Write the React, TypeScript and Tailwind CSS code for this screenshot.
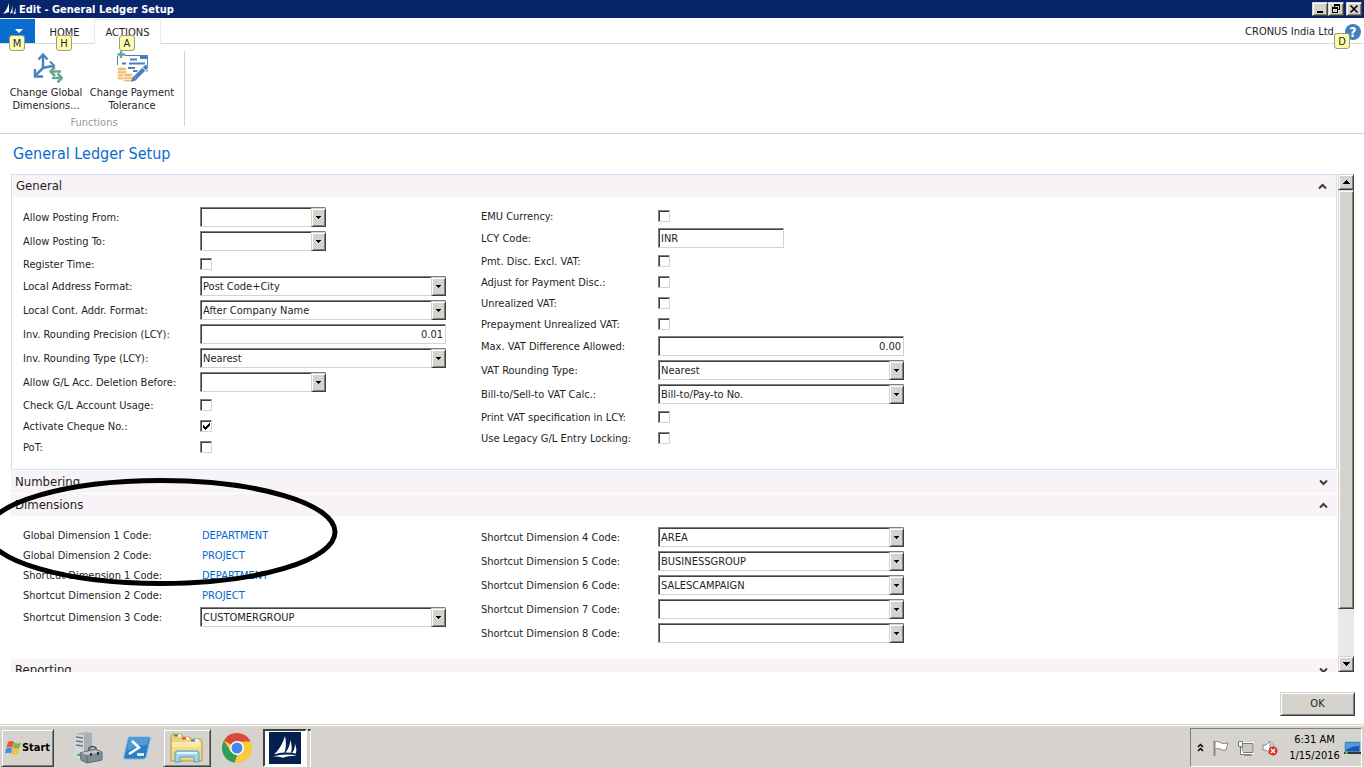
import { useState } from "react";
import type { ReactNode } from "react";

type Field = {
  id: string;
  label: string;
  kind: "lookup" | "option" | "text" | "number" | "check" | "link";
  value?: string;
  narrow?: boolean;
  checked?: boolean;
};

const generalLeft: Field[] = [
  { id: "posting-from", label: "Allow Posting From:", kind: "lookup", narrow: true },
  { id: "posting-to", label: "Allow Posting To:", kind: "lookup", narrow: true },
  { id: "register-time", label: "Register Time:", kind: "check" },
  { id: "address-format", label: "Local Address Format:", kind: "option", value: "Post Code+City" },
  { id: "contact-format", label: "Local Cont. Addr. Format:", kind: "option", value: "After Company Name" },
  { id: "inv-precision", label: "Inv. Rounding Precision (LCY):", kind: "number", value: "0.01" },
  { id: "inv-type", label: "Inv. Rounding Type (LCY):", kind: "option", value: "Nearest" },
  { id: "deletion-before", label: "Allow G/L Acc. Deletion Before:", kind: "lookup", narrow: true },
  { id: "check-usage", label: "Check G/L Account Usage:", kind: "check" },
  { id: "cheque-no", label: "Activate Cheque No.:", kind: "check", checked: true },
  { id: "pot", label: "PoT:", kind: "check" },
];

const generalRight: Field[] = [
  { id: "emu", label: "EMU Currency:", kind: "check" },
  { id: "lcy", label: "LCY Code:", kind: "text", value: "INR", narrow: true },
  { id: "pmt-disc", label: "Pmt. Disc. Excl. VAT:", kind: "check" },
  { id: "adjust-disc", label: "Adjust for Payment Disc.:", kind: "check" },
  { id: "unrealized", label: "Unrealized VAT:", kind: "check" },
  { id: "prepayment", label: "Prepayment Unrealized VAT:", kind: "check" },
  { id: "max-diff", label: "Max. VAT Difference Allowed:", kind: "number", value: "0.00" },
  { id: "vat-type", label: "VAT Rounding Type:", kind: "option", value: "Nearest" },
  { id: "bill-sell", label: "Bill-to/Sell-to VAT Calc.:", kind: "option", value: "Bill-to/Pay-to No." },
  { id: "print-vat", label: "Print VAT specification in LCY:", kind: "check" },
  { id: "legacy", label: "Use Legacy G/L Entry Locking:", kind: "check" },
];

const dimensionsLeft: Field[] = [
  { id: "global-1", label: "Global Dimension 1 Code:", kind: "link", value: "DEPARTMENT" },
  { id: "global-2", label: "Global Dimension 2 Code:", kind: "link", value: "PROJECT" },
  { id: "shortcut-1", label: "Shortcut Dimension 1 Code:", kind: "link", value: "DEPARTMENT" },
  { id: "shortcut-2", label: "Shortcut Dimension 2 Code:", kind: "link", value: "PROJECT" },
  { id: "shortcut-3", label: "Shortcut Dimension 3 Code:", kind: "lookup", value: "CUSTOMERGROUP" },
];

const dimensionsRight: Field[] = [
  { id: "shortcut-4", label: "Shortcut Dimension 4 Code:", kind: "lookup", value: "AREA" },
  { id: "shortcut-5", label: "Shortcut Dimension 5 Code:", kind: "lookup", value: "BUSINESSGROUP" },
  { id: "shortcut-6", label: "Shortcut Dimension 6 Code:", kind: "lookup", value: "SALESCAMPAIGN" },
  { id: "shortcut-7", label: "Shortcut Dimension 7 Code:", kind: "lookup" },
  { id: "shortcut-8", label: "Shortcut Dimension 8 Code:", kind: "lookup" },
];

const sunken =
  "border border-t-[#808080] border-l-[#808080] border-r-[#d6d3ce] border-b-[#d6d3ce] shadow-[inset_1px_1px_0_#404040]";
const raised =
  "bg-[#d6d3ce] border border-t-[#d6d3ce] border-l-[#d6d3ce] border-r-[#404040] border-b-[#404040] shadow-[inset_1px_1px_0_#ffffff,inset_-1px_-1px_0_#808080]";

function DropArrow() {
  return (
    <svg width="5" height="3" viewBox="0 0 5 3" shapeRendering="crispEdges" aria-hidden="true">
      <path d="M0 0h5v1H4v1H3v1H2V2H1V1H0z" fill="#000" />
    </svg>
  );
}

function Control({ field }: { field: Field }) {
  const [value, setValue] = useState(field.value ?? "");
  const [checked, setChecked] = useState(field.checked ?? false);
  const width = field.narrow ? "w-[126px]" : "w-[246px]";

  if (field.kind === "link") {
    return (
      <a id={field.id} href="#" className="pt-0.5 pl-0.5 text-[#0066cc]">
        {field.value}
      </a>
    );
  }
  if (field.kind === "check") {
    return (
      <span className="relative flex">
        <input
          id={field.id}
          type="checkbox"
          checked={checked}
          onChange={(e) => setChecked(e.target.checked)}
          className={`h-3 w-3 appearance-none bg-white ${sunken}`}
        />
        {checked && (
          <svg className="pointer-events-none absolute top-[3px] left-[3px]" width="7" height="7" viewBox="0 0 7 7" shapeRendering="crispEdges" aria-hidden="true">
            <path d="M0 2h1v1h1v1h1V3h1V2h1V1h1V0h1v3H6v1H5v1H4v1H3v1H2V6H1V5H0z" fill="#000" />
          </svg>
        )}
      </span>
    );
  }
  if (field.kind === "option") {
    return (
      <span className={`relative flex h-5 ${width}`}>
        <select id={field.id} className={`h-5 w-full appearance-none bg-white pt-0.5 pl-0.5 ${sunken}`}>
          <option>{field.value}</option>
        </select>
        <span className={`pointer-events-none absolute top-px right-0 flex h-[19px] w-[15px] items-center justify-center ${raised}`}>
          <DropArrow />
        </span>
      </span>
    );
  }
  return (
    <span className={`relative flex h-5 ${width}`}>
      <input
        id={field.id}
        type="text"
        value={value}
        onChange={(e) => setValue(e.target.value)}
        className={`h-5 w-full bg-white px-0.5 ${field.kind === "number" ? "text-right" : ""} ${sunken}`}
      />
      {field.kind === "lookup" && (
        <button
          type="button"
          aria-label={`Look up ${field.label}`}
          className={`absolute top-px right-0 flex h-[19px] w-[15px] items-center justify-center ${raised}`}
        >
          <DropArrow />
        </button>
      )}
    </span>
  );
}

function FieldColumn({ fields }: { fields: Field[] }) {
  return (
    <div className="w-[458px] shrink-0">
      {fields.map((f) => {
        const height = f.kind === "check" ? "h-[21px]" : f.kind === "link" ? "h-5" : "h-6";
        return (
          <div key={f.id} className={`flex items-center ${height}`}>
            <label htmlFor={f.id} className="w-[177px] shrink-0 pt-0.5">
              {f.label}
            </label>
            <Control field={f} />
          </div>
        );
      })}
    </div>
  );
}

function FastTab({ title, open, children }: { title: string; open?: boolean; children?: ReactNode }) {
  return (
    <section>
      <button type="button" aria-expanded={!!open} className="flex h-[22px] w-full items-center justify-between bg-[#f7f3f7] pr-[9px] pl-1 text-left text-[13px]">
        {title}
        <svg width="9" height="7" viewBox="0 0 9 7" fill="none" stroke="#3c3c3c" strokeWidth="2" aria-hidden="true">
          <path d={open ? "M1 5.5l3.5-3.5L8 5.5" : "M1 1.5L4.5 5 8 1.5"} />
        </svg>
      </button>
      {children}
    </section>
  );
}

function KeyTip({ children, className }: { children: string; className: string }) {
  return (
    <span className={`absolute z-10 flex h-4 w-4 items-center justify-center rounded-[3px] border border-[#999] bg-[#ffffa0] text-[11px] leading-none text-[#1c1c6c] ${className}`}>
      {children}
    </span>
  );
}

function Sails({ className }: { className: string }) {
  return (
    <svg viewBox="0 0 32 32" className={className} fill="#fff" aria-hidden="true">
      <path d="M16 4Q13 15 5 22.500q5-2 10.500-2Q18 13 16 4z" />
      <path d="M21.500 8q-1 8-5 12.500l5.500.3q1.500-6-.5-12.800z" />
      <path d="M26 11.500q0 6-3 9.500l4 .6q1-5-1-10.100z" />
      <path d="M4 24.500q12-3.500 24-.8-10 0-14 2-5-1.700-10-1.200z" />
    </svg>
  );
}

function TitleBar() {
  return (
    <header className="flex h-[18px] items-center justify-between bg-[#08246b] pr-0.5 pl-0.5 text-white">
      <div className="flex items-center">
        <svg width="16" height="16" viewBox="0 0 16 16" fill="#fff" aria-hidden="true">
          <path d="M7 2v9L1 13q4-4 6-11z" />
          <path d="M10.500 4.500V12L8 12.500q2-4 2.500-8z" />
          <path d="M13.500 6v7h-2q1.500-3 2-7z" />
        </svg>
        <h1 className="ml-px pt-0.5 text-[11px] font-bold">Edit - General Ledger Setup</h1>
      </div>
      <div className="flex text-black">
        <button type="button" aria-label="Minimize" className={`flex h-[14px] w-4 items-center justify-center ${raised}`}>
          <svg width="12" height="10" viewBox="0 0 12 10"><path d="M3 7h6v2H3z" /></svg>
        </button>
        <button type="button" aria-label="Restore" className={`flex h-[14px] w-4 items-center justify-center ${raised}`}>
          <svg width="12" height="10" viewBox="0 0 12 10" shapeRendering="crispEdges">
            <path d="M4 0h6v6H8V5h1V2H5v1H4zM2 3h6v6H2zm1 2v3h4V5z" fillRule="evenodd" />
          </svg>
        </button>
        <button type="button" aria-label="Close" className={`ml-0.5 flex h-[14px] w-4 items-center justify-center ${raised}`}>
          <svg width="12" height="10" viewBox="0 0 12 10" stroke="#000" strokeWidth="1.6"><path d="M2.500 1.500l7 7M9.500 1.500l-7 7" /></svg>
        </button>
      </div>
    </header>
  );
}

function DimensionsIcon() {
  return (
    <svg width="34" height="32" viewBox="0 0 34 32" fill="none" aria-hidden="true">
      <g stroke="#4a80c0" strokeWidth="2.500">
        <path d="M14 5v12l-7 7M14 17l9-2" />
        <path d="M9.500 8.500L14 3.500l4.500 5M6 18v7.500h8" />
        <path d="M21 10.500l4 4-2 2" strokeWidth="2" />
      </g>
      <g stroke="#68a890" strokeWidth="2.500">
        <path d="M22 20.500h10M26 16l-4.500 4.500L26 25" />
        <path d="M23 27h9M28.500 22.500L33 27l-4.500 4.500" />
      </g>
    </svg>
  );
}

function PaymentIcon() {
  return (
    <svg width="34" height="32" viewBox="0 0 34 32" fill="none" aria-hidden="true">
      <path d="M2.500 5v9M10 4.500h22.500V20H20" stroke="#4a80c0" />
      <path d="M25 5h7v3h-7z" fill="#4a80c0" />
      <path d="M15 8.500h7M7 12.500h4M14 12.500h16M13 17h7" stroke="#4a80c0" strokeWidth="2" />
      <path d="M6 0v7M2.500 3.500h7.500" stroke="#68a890" strokeWidth="2.500" />
      <g fill="#eebc70" stroke="#fff" strokeWidth=".8">
        <ellipse cx="7" cy="27" rx="5" ry="2" />
        <ellipse cx="7" cy="24" rx="5" ry="2" />
        <ellipse cx="7" cy="21" rx="5" ry="2" />
        <ellipse cx="7" cy="18" rx="5" ry="2" />
        <ellipse cx="13" cy="29" rx="5" ry="2" />
        <ellipse cx="13" cy="26.500" rx="5" ry="2" />
        <ellipse cx="13" cy="24" rx="5" ry="2" />
      </g>
      <path d="M18 20h4" stroke="#4a80c0" strokeWidth="2" />
      <path d="M32 15L20 27" stroke="#fff" strokeWidth="6" />
      <path d="M32 15L20 27" stroke="#4a80c0" strokeWidth="4" />
      <path d="M27.500 16.500l3 3" stroke="#fff" />
      <path d="M18 25l-2 6 6-2z" fill="#4a80c0" />
    </svg>
  );
}

function Ribbon() {
  return (
    <div className="border-b border-[#d4d4d4]">
      <nav className="flex h-[26px] items-end justify-between border-b border-[#d9d9d9]">
        <div className="flex h-6 text-[11px]">
          <div className="relative">
            <button type="button" aria-label="Application menu" className="flex h-6 w-[35px] items-center justify-center bg-[#0a6cce] pl-0.5">
              <svg width="8" height="4" viewBox="0 0 8 4"><path d="M0 0h8L4 4z" fill="#fff" /></svg>
            </button>
            <KeyTip className="top-4 left-[9px]">M</KeyTip>
          </div>
          <div className="relative flex w-[59px]">
            <button type="button" className="w-full pt-1">HOME</button>
            <KeyTip className="top-4 left-[21px]">H</KeyTip>
          </div>
          <div className="relative flex w-[67px]">
            <button type="button" className="mb-[-1px] w-full border border-b-0 border-[#dcecf8] bg-white pt-0.5">ACTIONS</button>
            <KeyTip className="top-4 left-[25px]">A</KeyTip>
          </div>
        </div>
        <div className="relative flex h-6 items-center gap-2 pt-0.5 pr-[3px] text-[11px]">
          <span>CRONUS India Ltd.</span>
          <button type="button" aria-label="Help" className="flex h-4 w-4 items-center justify-center rounded-full bg-[#3f7fc0] text-sm font-bold text-white">?</button>
          <KeyTip className="top-[14px] right-[14px]">D</KeyTip>
        </div>
      </nav>
      <div className="flex h-[89px] py-[7px]">
        <div className="flex flex-col items-center border-r border-[#d4d4d4] pr-2 pl-1">
          <div className="flex text-center text-[11px] leading-[13px]">
            <button type="button" className="flex w-[84px] flex-col items-center">
              <DimensionsIcon />
              <span className="mt-[3px]">Change Global Dimensions...</span>
            </button>
            <button type="button" className="flex w-[88px] flex-col items-center">
              <PaymentIcon />
              <span className="mt-[3px]">Change Payment Tolerance</span>
            </button>
          </div>
          <span className="mt-1 pl-2 text-[11px] leading-[13px] text-[#999]">Functions</span>
        </div>
      </div>
    </div>
  );
}

function ScrollBar() {
  return (
    <div className="flex w-4 shrink-0 flex-col bg-[#ebe9e5]">
      <button type="button" aria-label="Scroll up" className={`flex h-4 items-center justify-center ${raised}`}>
        <svg width="7" height="4" viewBox="0 0 7 4" shapeRendering="crispEdges"><path d="M3 0h1v1h1v1h1v1h1v1H0V3h1V2h1V1h1z" /></svg>
      </button>
      <div className="flex-1">
        <div className={`h-[90%] ${raised}`} />
      </div>
      <button type="button" aria-label="Scroll down" className={`flex h-4 items-center justify-center ${raised}`}>
        <svg width="7" height="4" viewBox="0 0 7 4" shapeRendering="crispEdges"><path d="M0 0h7v1H6v1H5v1H4v1H3V3H2V2H1V1H0z" /></svg>
      </button>
    </div>
  );
}

function StartFlag() {
  return (
    <svg width="17" height="16" viewBox="0 0 17 16" aria-hidden="true">
      <path d="M3 2q3-2 6 0L7.500 7.500q-3-1.500-6 0z" fill="#e8542c" />
      <path d="M9.500 2.500q3 2 6.500 0L14.500 8q-3 1.500-6.500 0z" fill="#7fb83c" />
      <path d="M1.300 8.300q3-1.500 6 0L6 13.500q-3-1.500-6 0z" fill="#3f8fdc" />
      <path d="M7.800 8.800q3 1.700 6.500 0L13 14q-3.500 1.500-6.500 0z" fill="#f8c030" />
    </svg>
  );
}

function ServerIcon() {
  return (
    <svg width="30" height="32" viewBox="0 0 30 32" aria-hidden="true">
      <path d="M2 2l11-2 6 1v25l-8 3-9-3z" fill="#a9b1b6" />
      <path d="M2 2l9 1v26l-9-3z" fill="#d3d9dc" />
      <path d="M3 5l7 1M3 9l7 1M3 13l7 1" stroke="#6c777d" strokeWidth="1.500" />
      <path d="M4 23h3" stroke="#60b060" strokeWidth="2" />
      <path d="M16 19v-3q4-3 7 0v2" fill="none" stroke="#454d52" strokeWidth="1.500" />
      <path d="M7 21l15-4 7 3v8l-15 3-6-3z" fill="#7f8d94" stroke="#5e6a70" />
      <path d="M8 21l14-3 6 2-14 3z" fill="#c0c9cd" />
      <path d="M14 23v7" stroke="#5e6a70" />
      <path d="M18 21v3M25 20v3" stroke="#2c3236" strokeWidth="2" />
    </svg>
  );
}

function PowerShellIcon() {
  return (
    <svg width="28" height="24" viewBox="0 0 28 24" aria-hidden="true">
      <path d="M6 1h20q2 0 1 3l-4 17q-.5 2-3 2H2q-2 0-1-3L5 3q0-2 1-2z" fill="#2d7fc4" stroke="#7cb8e8" />
      <path d="M6 2h20l-2 7Q14 9 4 15z" fill="#65aee4" opacity=".6" />
      <path d="M9 5l7 6.500L6 18M14 18.500h7" fill="none" stroke="#fff" strokeWidth="2.500" />
    </svg>
  );
}

function FolderIcon() {
  return (
    <svg width="34" height="30" viewBox="0 0 34 30" aria-hidden="true">
      <path d="M1 3l2-2h8l2 3h6l2 2h9l2 3v19H1z" fill="#ecd27c" stroke="#b89840" />
      <path d="M4 2.500h7M12 5.500h7M21 7.500h8" stroke="#fff" strokeWidth="2" />
      <path d="M4 2.500h4" stroke="#20a030" strokeWidth="2" />
      <path d="M12 5.500h4" stroke="#d04030" strokeWidth="2" />
      <path d="M21 7.500h4" stroke="#3080d8" strokeWidth="2" />
      <path d="M2 9h29v17H2z" fill="#faeaa6" />
      <path d="M2 14h29v12H2z" fill="#f3dc86" />
      <path d="M5 29V20q0-2 2-2h20q2 0 2 2v9h-5v-5H10v5z" fill="#9fd4ee" stroke="#5a9cc0" />
      <path d="M7 20h20" stroke="#e4f6fe" strokeWidth="2" />
    </svg>
  );
}

function ChromeIcon() {
  return (
    <svg width="30" height="30" viewBox="0 0 30 30" aria-hidden="true">
      <circle cx="15" cy="15" r="15" fill="#fbc93e" />
      <path d="M15 15L2 7.500A15 15 0 0 1 28.500 8.500H15z" fill="#d9483b" />
      <path d="M2 7.500L8.700 18.500 15 22l-3 7.700A15 15 0 0 1 2 7.500z" fill="#2e9e58" />
      <path d="M8.500 18.500A7 7 0 0 0 15 22l-2.500 7.800z" fill="#2e9e58" />
      <circle cx="15" cy="15" r="7" fill="#fff" />
      <circle cx="15" cy="15" r="5.500" fill="#4587f0" />
    </svg>
  );
}

function TaskBar() {
  return (
    <footer className="flex h-11 shrink-0 items-stretch justify-between border-t border-[#d6d3ce] bg-[#d6d3ce] shadow-[inset_0_1px_0_#ffffff]">
      <div className="flex items-center pt-0.5 pl-px">
        <button type="button" className={`flex h-[38px] w-[53px] items-center justify-center text-[11px] font-bold text-black ${raised}`}>
          <StartFlag />
          Start
        </button>
        <button type="button" aria-label="Server Manager" className="ml-[19px] flex w-[30px] justify-center"><ServerIcon /></button>
        <button type="button" aria-label="PowerShell" className="ml-5 flex w-7 justify-center"><PowerShellIcon /></button>
        <button type="button" aria-label="Windows Explorer" className={`ml-3 flex h-[38px] w-12 items-center justify-center ${raised}`}><FolderIcon /></button>
        <button type="button" aria-label="Chrome" className="ml-[11px]"><ChromeIcon /></button>
        <button type="button" aria-label="Dynamics NAV" className="ml-[11px] flex h-[38px] w-11 items-center justify-center border-2 border-t-[#404040] border-r-white border-b-white border-l-[#404040] bg-white">
          <span className="flex h-8 w-8 bg-[#04204f]"><Sails className="h-8 w-8" /></span>
        </button>
        <span className="ml-px h-[38px] w-[3px] border-t-2 border-r border-t-[#404040] border-r-white" />
      </div>
      <div className="mt-[3px] mr-0.5 mb-px flex items-center border border-t-[#808080] border-r-white border-b-white border-l-[#808080] pl-1.5 text-[11px] text-black">
        <button type="button" aria-label="Show hidden icons">
          <svg width="7" height="9" viewBox="0 0 7 9" fill="none" stroke="#000" strokeWidth="1.500"><path d="M1 4l2.500-2.500L6 4M1 8l2.500-2.500L6 8" /></svg>
        </button>
        <svg className="ml-2" width="17" height="16" viewBox="0 0 17 16" aria-hidden="true">
          <path d="M2.500 1v15" stroke="#888" strokeWidth="2" />
          <path d="M3 2q3-2 6 1 3 1 7 0l-2 7q-3 1-6-1-2-1-5 0z" fill="#fff" stroke="#888" />
        </svg>
        <svg className="ml-2" width="17" height="16" viewBox="0 0 17 16" aria-hidden="true">
          <path d="M5 3.500h11v9H5z" fill="#c8c8c8" stroke="#fff" strokeWidth="3" />
          <path d="M5 3.500h11v9H5z" fill="#c8c8c8" stroke="#777" />
          <path d="M7 15h8" stroke="#777" strokeWidth="1.500" />
          <path d="M1.500 1.500h4v5h-4zM3.500 7v7.500H7" fill="#fff" stroke="#777" />
        </svg>
        <svg className="ml-2" width="16" height="16" viewBox="0 0 16 16" aria-hidden="true">
          <path d="M1 5h3l4-4v13l-4-4H1z" fill="#fff" stroke="#888" />
          <path d="M10 3q2 2 2 4" fill="none" stroke="#999" />
          <circle cx="11" cy="11" r="4.500" fill="#d83020" />
          <path d="M9 9l4 4M13 9l-4 4" stroke="#fff" strokeWidth="1.500" />
        </svg>
        <div className="ml-[11px] w-[51px] text-center leading-4">
          <div>6:31 AM</div>
          <div>1/15/2016</div>
        </div>
        <svg className="ml-1" width="17" height="14" viewBox="0 0 17 14" aria-hidden="true">
          <path d="M1 1h15v10H1z" fill="#1a57b0" stroke="#80a8d0" />
          <path d="M2 2h13v3Q8 5 2 9z" fill="#4f9ae0" />
          <path d="M0 11h17v2H0z" fill="#333" />
          <path d="M1 10h3v3H1z" fill="#50b040" />
        </svg>
      </div>
    </footer>
  );
}

export default function App() {
  return (
    <div className="relative flex h-screen flex-col overflow-hidden bg-white font-['DejaVu_Sans_Condensed','DejaVu_Sans',sans-serif] text-[11px] leading-[14px] text-[#1e1e1e]">
      <TitleBar />
      <Ribbon />
      <h2 className="px-[13px] pt-2.5 pb-2.5 text-base leading-5 text-[#0a6cce]">General Ledger Setup</h2>
      <main className="flex min-h-0 flex-1 pr-2.5 pl-[11px]">
        <div className="mr-px min-w-0 flex-1 overflow-hidden">
          <div className="border border-[#cfe0f8]">
            <FastTab title="General" open>
              <div className="flex px-[11px] pt-2 pb-3">
                <FieldColumn fields={generalLeft} />
                <FieldColumn fields={generalRight} />
              </div>
            </FastTab>
          </div>
          <div className="mt-px flex flex-col gap-px">
            <FastTab title="Numbering" />
            <FastTab title="Dimensions" open>
              <div className="flex px-3 pt-[9px] pb-[13px]">
                <FieldColumn fields={dimensionsLeft} />
                <FieldColumn fields={dimensionsRight} />
              </div>
            </FastTab>
            <FastTab title="Reporting" />
          </div>
        </div>
        <ScrollBar />
      </main>
      <div className="flex shrink-0 justify-end px-[9px] pt-5 pb-2">
        <button type="button" className={`h-6 w-[75px] ${raised}`}>OK</button>
      </div>
      <TaskBar />
      {/* hand-drawn highlight around the global dimensions */}
      <svg className="pointer-events-none absolute top-[476px] left-0" width="342" height="112" viewBox="0 0 342 112" aria-hidden="true">
        <ellipse cx="161" cy="56" rx="174" ry="51.500" fill="none" stroke="#000" strokeWidth="5" />
      </svg>
    </div>
  );
}
